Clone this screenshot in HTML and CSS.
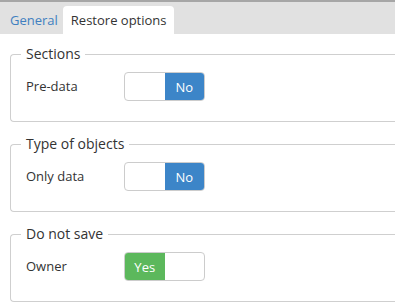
FILE: index.html
```html
<!DOCTYPE html>
<html>
<head>
<meta charset="utf-8">
<link rel="stylesheet" href="styles.css">
</head>
<body>
<div class="tabs">
  <a class="tab">General</a>
  <a class="tab active">Restore options</a>
</div>
<div class="content">
  <fieldset class="group">
    <legend>Sections</legend>
    <div class="row">
      <span class="label">Pre-data</span>
      <div class="toggle off"><span class="half"></span><span class="half on-no">No</span></div>
    </div>
  </fieldset>
  <fieldset class="group">
    <legend>Type of objects</legend>
    <div class="row">
      <span class="label">Only data</span>
      <div class="toggle off"><span class="half"></span><span class="half on-no">No</span></div>
    </div>
  </fieldset>
  <fieldset class="group">
    <legend>Do not save</legend>
    <div class="row">
      <span class="label">Owner</span>
      <div class="toggle"><span class="half on-yes">Yes</span><span class="half"></span></div>
    </div>
  </fieldset>
</div>
</body>
</html>
```
FILE: styles.css
```css
html, body {
  margin: 0;
  padding: 0;
  overflow: hidden;
  background: #fff;
}
body {
  font-family: "Open Sans", "Noto Sans", sans-serif;
  color: #333;
  font-size: 13px;
  width: 395px;
}
.tabs {
  border-top: 2px solid #a6a6a6;
  background: #e1e1e1;
  height: 32px;
  display: flex;
  align-items: flex-end;
  padding-left: 5px;
}
.tab {
  height: 28px;
  line-height: 28px;
  padding: 0 5px;
  font-size: 13px;
  color: #3f7fc0;
  border-radius: 4px 4px 0 0;
}
.tab.active {
  background: #fff;
  color: #333;
  padding: 0 8px;
}
.content {
  padding-top: 10px;
}
.group {
  margin: 0 0 12px 10px;
  border: 1px solid #cfcfcf;
  border-right: none;
  border-radius: 4px 0 0 4px;
  padding: 0 0 20px 15px;
  min-width: 0;
}
.group legend {
  font-size: 14px;
  line-height: 20px;
  padding: 0 5px;
  margin-left: -5px;
  color: #333;
}
.row {
  display: flex;
  align-items: center;
  padding-top: 8px;
}
.label {
  width: 98px;
  font-size: 13px;
  margin-top: -2px;
}
.toggle {
  display: flex;
  width: 79px;
  height: 27px;
  border: 1px solid #cccccc;
  border-radius: 4px;
  overflow: hidden;
}
.half {
  flex: 1;
  display: flex;
  align-items: center;
  justify-content: center;
  font-size: 13px;
  color: #fff;
}
.on-no {
  background: #3c85c8;
}
.on-yes {
  background: #5cb85c;
}
```
